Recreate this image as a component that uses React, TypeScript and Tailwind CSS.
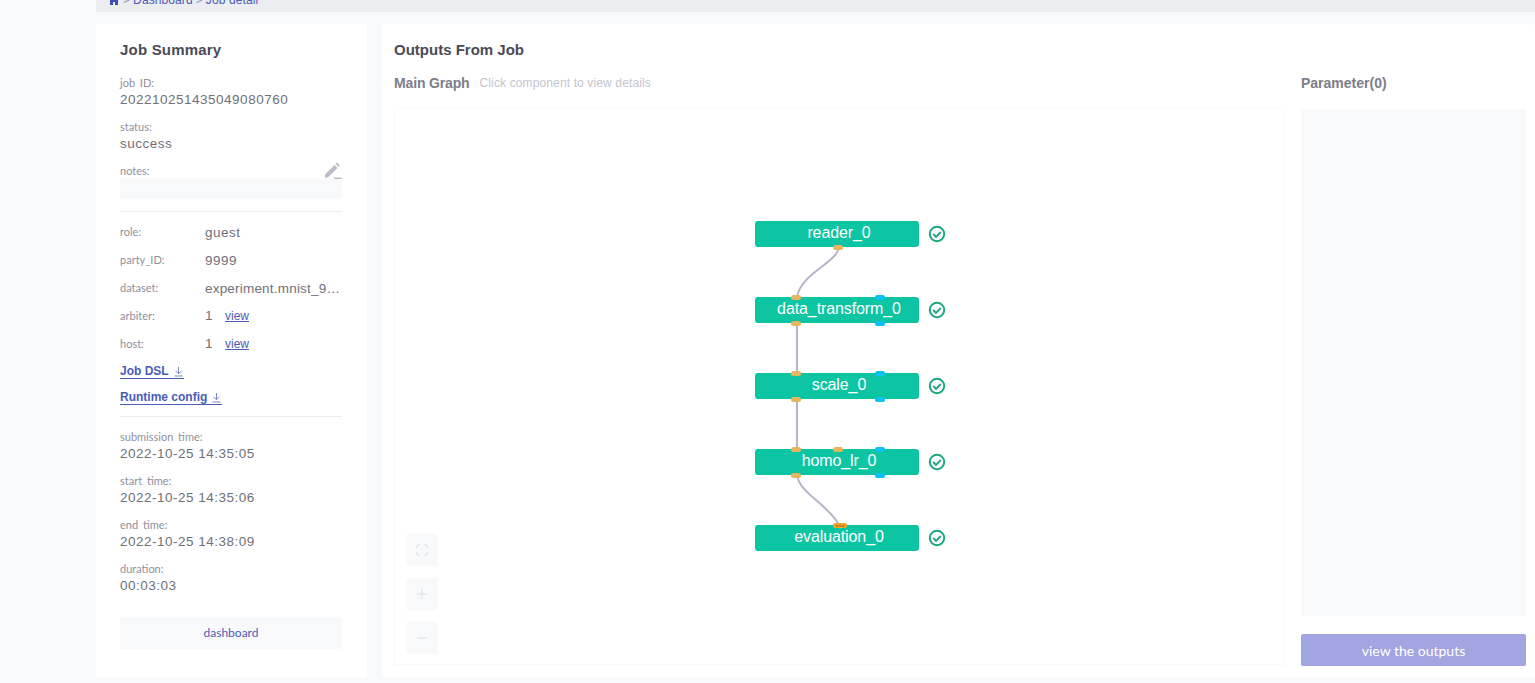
import type { ReactNode } from 'react';

const labelClass = "font-['Lato',sans-serif] text-[11px] leading-[16px] text-[#8f8f9b] [word-spacing:2px]";
const valueClass = "font-['Liberation_Sans',sans-serif] text-[13.5px] leading-[18px] text-[#707078] tracking-[0.5px]";

const nodes = [
  { name: 'reader_0', top: 113 },
  { name: 'data_transform_0', top: 189 },
  { name: 'scale_0', top: 265 },
  { name: 'homo_lr_0', top: 341 },
  { name: 'evaluation_0', top: 417 },
];

// port positions inside the graph box
const orangePorts = [
  { x: 444, y: 139 },
  { x: 402, y: 189 },
  { x: 402, y: 215 },
  { x: 402, y: 265 },
  { x: 402, y: 291 },
  { x: 402, y: 341 },
  { x: 444, y: 341 },
  { x: 402, y: 367 },
];

const bluePorts = [
  { x: 486, y: 189 },
  { x: 486, y: 215 },
  { x: 486, y: 265 },
  { x: 486, y: 291 },
  { x: 486, y: 341 },
  { x: 486, y: 367 },
];

function InfoBlock({ label, value, mt }: { label: string; value: string; mt: string }) {
  return (
    <div className={mt}>
      <div className={labelClass}>{label}</div>
      <div className={valueClass}>{value}</div>
    </div>
  );
}

function InfoRow({ label, children, extra = 'pt-[1px]' }: { label: string; children: ReactNode; extra?: string }) {
  return (
    <div className="flex h-[28px] items-center">
      <div className={`${labelClass} w-[85px] shrink-0`}>{label}</div>
      <div className={`${valueClass} min-w-0 flex-1 truncate ${extra}`}>{children}</div>
    </div>
  );
}

function CountRow({ label }: { label: string }) {
  return (
    <InfoRow label={label} extra="">
      <span className="inline-block w-[20px]">1</span>
      <span className="text-[12px] tracking-normal text-[#4a5cb8] underline">view</span>
    </InfoRow>
  );
}

function DownloadIcon() {
  return (
    <svg width="11" height="11" viewBox="0 0 11 11" fill="none" stroke="#7c83c8" strokeWidth="1" className="ml-[4px]">
      <path d="M5.5 1v6.5M2.5 4.8l3 3 3-3M1.5 10h8" />
    </svg>
  );
}

function DownloadLink({ text, mt }: { text: string; mt?: string }) {
  return (
    <div className={`flex h-[26px] items-center ${mt ?? ''}`}>
      <span className="flex items-center border-b border-[#4a5cb8] font-['Liberation_Sans',sans-serif] text-[12px] font-bold leading-[13px] text-[#4a5cb8]">
        {text}
        <DownloadIcon />
      </span>
    </div>
  );
}

function StatusIcon() {
  return (
    <svg width="18" height="18" viewBox="0 0 18 18" fill="none" stroke="#1fa67f" strokeWidth="2">
      <circle cx="9" cy="9" r="7.2" />
      <path d="M5.2 9l2.8 2.8 4.8-4.8" strokeWidth="1.9" />
    </svg>
  );
}

function ZoomButton({ children }: { children: ReactNode }) {
  return <div className="flex h-[32px] w-[32px] items-center justify-center rounded-[2px] bg-[#f8f9fb]">{children}</div>;
}

function Graph() {
  return (
    <div className="relative h-[557px] flex-1 border border-[#f8f9fb]">
      <svg className="absolute left-0 top-0" width="889" height="555" fill="none" stroke="#b6b4c6" strokeWidth="2">
        <path d="M444 138C442 154 406 164 402 188" />
        <path d="M402 214V264" />
        <path d="M402 290V340" />
        <path d="M402 366C404 384 434 396 444 416" />
      </svg>

      {nodes.map((node) => (
        <div key={node.name}>
          <div
            className="absolute left-[360px] flex h-[26px] w-[164px] justify-center rounded-[3px] bg-[#0ec5a3] pl-[4px] font-['Liberation_Sans',sans-serif] text-[16px] leading-[23px] tracking-[-0.1px] text-white"
            style={{ top: node.top - 1 }}
          >
            {node.name}
          </div>
          <div className="absolute left-[533px]" style={{ top: node.top + 3 }}>
            <StatusIcon />
          </div>
        </div>
      ))}

      {orangePorts.map((port) => (
        <div
          key={`${port.x}-${port.y}`}
          className="absolute h-[5px] w-[10px] rounded-full bg-[#e8b55f]"
          style={{ left: port.x - 6, top: port.y - 3 }}
        />
      ))}
      {bluePorts.map((port) => (
        <div
          key={`${port.x}-${port.y}`}
          className="absolute h-[5px] w-[10px] rounded-full bg-[#06c1f2]"
          style={{ left: port.x - 6, top: port.y - 3 }}
        />
      ))}
      <div className="absolute left-[438px] top-[414px] flex h-[5px] w-[14px] items-center justify-center gap-[1px] rounded-full bg-[#eda32c]">
        <span className="h-[2px] w-[2px] rounded-full bg-[#a8701a]" />
        <span className="h-[2px] w-[2px] rounded-full bg-[#a8701a]" />
        <span className="h-[2px] w-[2px] rounded-full bg-[#a8701a]" />
      </div>

      <div className="absolute left-[11px] top-[425px] flex flex-col gap-[12px]">
        <ZoomButton>
          <svg width="12" height="12" viewBox="0 0 12 12" fill="none" stroke="#dedee3" strokeWidth="1">
            <path d="M1 4V1h3M8 1h3v3M11 8v3H8M4 11H1V8" />
          </svg>
        </ZoomButton>
        <ZoomButton>
          <svg width="12" height="12" viewBox="0 0 12 12" fill="none" stroke="#dedee3" strokeWidth="1">
            <path d="M6 1v10M1 6h10" />
          </svg>
        </ZoomButton>
        <ZoomButton>
          <svg width="12" height="12" viewBox="0 0 12 12" fill="none" stroke="#dedee3" strokeWidth="1">
            <path d="M1 6h10" />
          </svg>
        </ZoomButton>
      </div>
    </div>
  );
}

export default function App() {
  return (
    <div className="h-[683px] w-[1535px] overflow-hidden bg-[#f8f9fb] pl-[96px]">
      <div className="flex h-[12px] items-end overflow-hidden bg-[#ebedf1] pl-[12px] font-['Liberation_Sans',sans-serif] text-[12px] leading-[14px] tracking-[0.1px] text-[#4a5cb8]">
        <div className="flex items-center pb-[5px]">
          <svg width="12" height="12" viewBox="0 0 12 12" fill="#3f51b5" className="mb-[1px] mr-[3px]">
            <path d="M6 1L0.5 6H2v5h3V8h2v3h3V6h1.5z" />
          </svg>
          <span className="mr-[3px] text-[#8f93b8]">&gt;</span>
          <span>Dashboard</span>
          <span className="mx-[3px] text-[#8f93b8]">&gt;</span>
          <span>Job detail</span>
        </div>
      </div>

      <div className="mt-[12px] flex gap-[15px]">
        <div className="h-[654px] w-[271px] shrink-0 rounded-[2px] bg-white pl-[24px] pr-[25px] pt-[17px]">
          <h2 className="font-['Liberation_Sans',sans-serif] text-[15px] font-bold leading-[18px] tracking-[0.2px] text-[#4a4b55]">Job Summary</h2>
          <InfoBlock label="job ID:" value="202210251435049080760" mt="mt-[16px]" />
          <InfoBlock label="status:" value="success" mt="mt-[10px]" />
          <div className="mt-[9px] flex items-end justify-between">
            <div className={labelClass}>notes:</div>
            <svg width="18" height="18" viewBox="0 0 18 18" fill="#bcbcc8" className="mb-[-1px]">
              <path d="M1 15.5V12.6L10.6 3l2.9 2.9L3.9 15.5zM11.6 2l1.4-1.4 2.9 2.9-1.4 1.4zM10 15.5h7.5v1.4H10z" />
            </svg>
          </div>
          <div className="h-[20px] bg-[#f8f9fb]" />
          <div className="mt-[12px] border-t border-[#ebedf1] pt-[6px]">
            <InfoRow label="role:">guest</InfoRow>
            <InfoRow label="party_ID:">9999</InfoRow>
            <InfoRow label="dataset:">
              <span className="tracking-[0.2px]">experiment.mnist_9999_homo</span>
            </InfoRow>
            <CountRow label="arbiter:" />
            <CountRow label="host:" />
            <DownloadLink text="Job DSL" mt="mt-[1px]" />
            <DownloadLink text="Runtime config" />
          </div>
          <div className="mt-[5px] border-t border-[#ebedf1]">
            <InfoBlock label="submission time:" value="2022-10-25 14:35:05" mt="mt-[12px]" />
            <InfoBlock label="start time:" value="2022-10-25 14:35:06" mt="mt-[10px]" />
            <InfoBlock label="end time:" value="2022-10-25 14:38:09" mt="mt-[10px]" />
            <InfoBlock label="duration:" value="00:03:03" mt="mt-[10px]" />
          </div>
          <div className="mt-[22px] flex h-[32px] items-center justify-center rounded-[2px] bg-[#f8f9fb] font-['Lato',sans-serif] text-[12px] text-[#4a5cb8]">
            dashboard
          </div>
        </div>

        <div className="h-[654px] min-w-0 flex-1 rounded-[2px] bg-white pl-[12px] pt-[17px]">
          <h2 className="font-['Liberation_Sans',sans-serif] text-[15px] font-bold leading-[18px] text-[#4a4b55]">Outputs From Job</h2>
          <div className="mt-[16px] flex gap-[16px]">
            <div className="flex w-[891px] shrink-0 flex-col">
              <div className="flex h-[16px] items-center font-['Liberation_Sans',sans-serif]">
                <span className="text-[14px] font-bold tracking-[-0.15px] text-[#7d7e8a]">Main Graph</span>
                <span className="ml-[10px] text-[12px] tracking-[0.13px] text-[#c4c4cf]">Click component to view details</span>
              </div>
              <div className="mt-[17px] flex">
                <Graph />
              </div>
            </div>
            <div className="flex w-[225px] shrink-0 flex-col">
              <div className="flex h-[16px] items-center font-['Liberation_Sans',sans-serif] text-[14px] font-bold text-[#7d7e8a]">Parameter(0)</div>
              <div className="mt-[18px] h-[507px] bg-[#f8f9fb]" />
              <div className="mt-[18px] flex h-[32px] items-center justify-center rounded-[2px] bg-[#a1a5e2] font-['Lato',sans-serif] text-[14px] text-white">
                view the outputs
              </div>
            </div>
          </div>
        </div>
      </div>
    </div>
  );
}
